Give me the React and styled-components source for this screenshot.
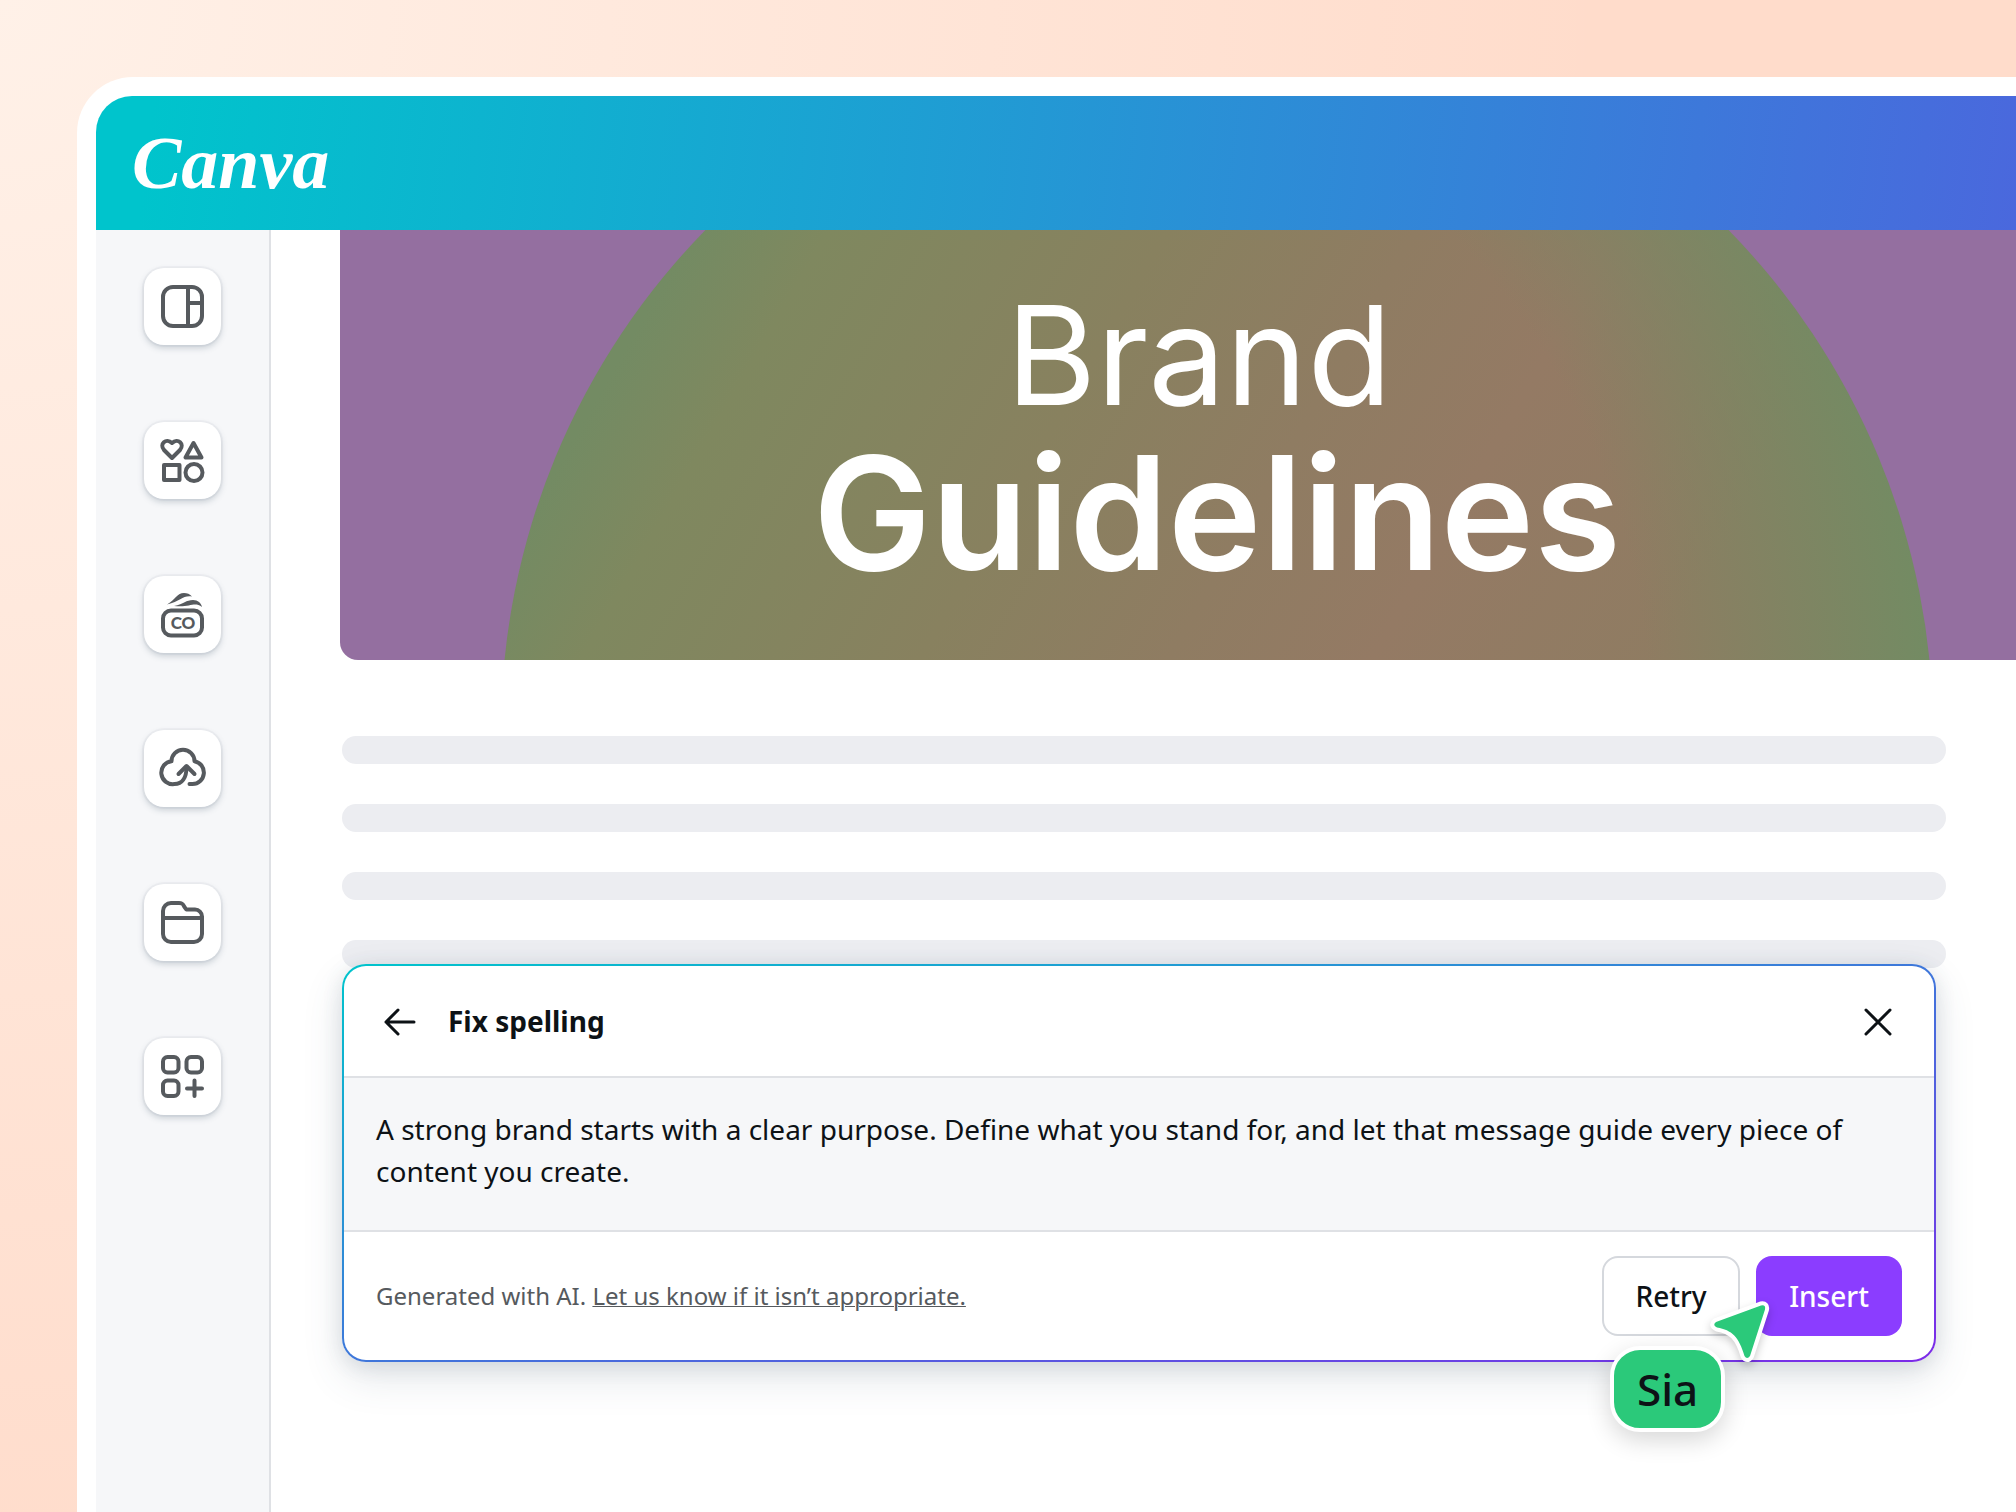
import styled, { createGlobalStyle } from "styled-components";

const GlobalStyle = createGlobalStyle`
  * {
    box-sizing: border-box;
  }

  body {
    margin: 0;
    overflow: hidden;
    font-family: "Noto Sans", sans-serif;
    color: #0d1216;
  }

  button {
    font-family: inherit;
    cursor: pointer;
  }
`;

const Page = styled.div`
  display: flex;
  min-height: 100vh;
  padding: 77px 0 0 77px;
  background:
    radial-gradient(circle at 0 0, #fff1e8 0%, rgba(255, 241, 232, 0) 1600px),
    #ffdccb;
`;

const Frame = styled.div`
  flex: 1;
  display: flex;
  padding: 19px 0 0 19px;
  border-top-left-radius: 56px;
  background: #fff;
`;

const AppWindow = styled.div`
  flex: 1;
  min-width: 0;
  display: flex;
  flex-direction: column;
  border-top-left-radius: 36px;
  overflow: hidden;
`;

const TopBar = styled.header`
  display: flex;
  align-items: center;
  height: 134px;
  padding: 0 36px;
  background: linear-gradient(97deg, #00c4cc 3%, #4a68dd 100%);
`;

const Logo = styled.a`
  font-family: "Liberation Serif", serif;
  font-size: 74px;
  line-height: 80px;
  font-weight: 700;
  font-style: italic;
  color: #fff;
  text-decoration: none;
`;

const Body = styled.div`
  flex: 1;
  display: flex;
`;

const Sidebar = styled.nav`
  display: flex;
  flex-direction: column;
  align-items: center;
  gap: 77px;
  width: 175px;
  padding-top: 38px;
  border-right: 2px solid #dfe1e5;
  background: #f6f7f9;
`;

const ToolButton = styled.button`
  display: flex;
  align-items: center;
  justify-content: center;
  width: 77px;
  height: 77px;
  padding: 0;
  border: 0;
  border-radius: 20px;
  background: #fff;
  color: #565a5e;
  box-shadow: 0 0 0 2px rgba(64, 87, 109, 0.04), 0 3px 6px rgba(64, 87, 109, 0.25);
`;

const ToolIcon = styled.svg`
  width: 55px;
  height: 55px;
  fill: none;
  stroke: currentColor;
  stroke-width: 4;
  stroke-linecap: round;
  stroke-linejoin: round;
`;

const Content = styled.main`
  flex: 1;
  min-width: 0;
  padding-left: 69px;
`;

const Hero = styled.section`
  display: flex;
  flex-direction: column;
  align-items: center;
  height: 430px;
  padding: 46px 0 0 78px;
  border-bottom-left-radius: 18px;
  overflow: hidden;
  position: relative;
  background: #946fa0;
`;

const Disc = styled.div`
  position: absolute;
  top: -215px;
  left: calc(50% + 39px - 716px);
  width: 1432px;
  height: 1432px;
  border-radius: 50%;
  background:
    radial-gradient(circle at 30% 50%, rgba(115, 139, 99, 0) 720px, #738b63 1000px),
    linear-gradient(
      120deg,
      #738b63 14%,
      #7f885f 20%,
      #88815f 35%,
      #8f7c62 46%,
      #947a64 55%,
      #8f7c62 68%
    );
`;

const HeroTitle = styled.h1`
  display: flex;
  flex-direction: column;
  align-items: center;
  margin: 0;
  position: relative;
  font-family: Inter, sans-serif;
  color: #fff;
`;

const TitleTop = styled.span`
  margin-right: 36px;
  font-size: 138px;
  line-height: 158px;
  font-weight: 400;
`;

const TitleBottom = styled.span`
  font-size: 158px;
  line-height: 158px;
  font-weight: 600;
`;

const TextBlock = styled.div`
  padding: 76px 70px 0 2px;
`;

const Lines = styled.div`
  display: flex;
  flex-direction: column;
  gap: 40px;
`;

const Line = styled.div`
  height: 28px;
  border-radius: 14px;
  background: #ecedf1;
`;

const Panel = styled.section`
  position: relative;
  margin: -4px 10px 0 0;
  border: 2px solid transparent;
  border-radius: 24px;
  background:
    linear-gradient(#fff, #fff) padding-box,
    linear-gradient(to bottom right, #00c4cc, #7d2ae8) border-box;
  box-shadow: 0 16px 40px rgba(64, 87, 109, 0.14), 0 4px 20px rgba(64, 87, 109, 0.14);
`;

const PanelHeader = styled.header`
  display: flex;
  align-items: center;
  height: 112px;
  padding: 0 32px;
  border-bottom: 2px solid #dfe1e5;
`;

const PanelTitle = styled.h2`
  flex: 1;
  margin: 0 0 0 24px;
  font-size: 28px;
  line-height: 40px;
  font-weight: 700;
`;

const IconButton = styled.button`
  display: flex;
  align-items: center;
  justify-content: center;
  width: 48px;
  height: 48px;
  padding: 0;
  border: 0;
  background: none;
  color: #0d1216;
`;

const ActionIcon = styled.svg`
  width: 36px;
  height: 36px;
  fill: none;
  stroke: currentColor;
  stroke-width: 3;
  stroke-linecap: round;
  stroke-linejoin: round;
`;

const Suggestion = styled.p`
  margin: 0;
  padding: 30px 32px 38px;
  border-bottom: 2px solid #dfe1e5;
  background: #f6f7f9;
  font-size: 28px;
  line-height: 42px;
`;

const PanelFooter = styled.footer`
  display: flex;
  align-items: center;
  justify-content: space-between;
  padding: 24px 32px;
`;

const Note = styled.p`
  margin: 0;
  font-size: 24px;
  line-height: 32px;
  color: #565a5e;

  a {
    color: inherit;
    text-decoration-thickness: 1px;
  }
`;

const Actions = styled.div`
  display: flex;
  gap: 16px;
`;

const ActionButton = styled.button`
  height: 80px;
  width: ${({ $primary }) => ($primary ? "146px" : "138px")};
  border: ${({ $primary }) => ($primary ? "0" : "2px solid #d5d8dd")};
  border-radius: 16px;
  background: ${({ $primary }) => ($primary ? "#8b3dff" : "#fff")};
  color: ${({ $primary }) => ($primary ? "#fff" : "#0d1216")};
  font-size: 28px;
  font-weight: 500;
`;

// collaborator pointer that floats over the panel
const Collaborator = styled.div`
  position: absolute;
  right: 160px;
  bottom: -72px;
  display: flex;
  flex-direction: column;
  width: 164px;
  pointer-events: none;
`;

const Pointer = styled.svg`
  align-self: flex-end;
  width: 66px;
  height: 68px;
  margin-bottom: -18px;
  overflow: visible;
  filter: drop-shadow(0 4px 4px rgba(0, 0, 0, 0.2));
`;

const NameTag = styled.span`
  align-self: flex-start;
  padding: 10px 23px;
  border: 4px solid #fff;
  border-radius: 30px;
  background: #2bc97a;
  box-shadow: 0 8px 24px rgba(0, 0, 0, 0.16);
  font-size: 44px;
  line-height: 58px;
  font-weight: 500;
`;

const tools = [
  {
    label: "Design",
    icon: (
      <>
        <rect x="8" y="8" width="39" height="39" rx="10" />
        <path d="M33 8v39M33 24h14" />
      </>
    ),
  },
  {
    label: "Elements",
    icon: (
      <>
        <path d="M17 25 9 17C4 11 11 4.500 17 10c6-5.500 13 1 8 7Z" />
        <path d="M38.500 10 30.500 24.500h16Z" />
        <path d="M9 32h15.500v15H9Z" />
        <circle cx="39" cy="39.500" r="8.500" />
      </>
    ),
  },
  {
    label: "Brand",
    icon: (
      <>
        <rect x="8" y="23.500" width="39" height="25" rx="8" />
        <path
          d="M12 17.500C21 12 22 6 29 6c3 0 6 1 8 3.500C28 8 26 14 12 17.500ZM19 19c10-2 12-6 19-6 5 0 8 3 9 7-8-6-12 1-28-1Z"
          fill="currentColor"
          strokeWidth="0"
        />
        <text
          x="28"
          y="42"
          textAnchor="middle"
          fontFamily="Lato, sans-serif"
          fontSize="17"
          fontWeight="900"
          fill="currentColor"
          stroke="none"
        >
          CO
        </text>
      </>
    ),
  },
  {
    label: "Uploads",
    icon: (
      <>
        <path d="M34.500 43h3a11.500 11.500 0 0 0 2-22.800 11.500 11.500 0 0 0-23 0A11.500 11.500 0 1 0 19.500 43c7.500 0 12-6 12-17" />
        <path d="M23.500 33l8-8 8 8" />
      </>
    ),
  },
  {
    label: "Projects",
    icon: (
      <>
        <path d="M8 16a8 8 0 0 1 8-8h8c4 0 4 1.500 5.500 4s1.500 2.500 4 2.500H40a7 7 0 0 1 7 7V39a8 8 0 0 1-8 8H16a8 8 0 0 1-8-8Z" />
        <path d="M8 23h39" />
      </>
    ),
  },
  {
    label: "Apps",
    icon: (
      <>
        <rect x="8" y="8" width="15.500" height="15.500" rx="4.500" />
        <rect x="31.500" y="8" width="15.500" height="15.500" rx="4.500" />
        <rect x="8" y="31.500" width="15.500" height="15.500" rx="4.500" />
        <path d="M39.500 31.500V47M32 39.500h15" />
      </>
    ),
  },
];

const App = () => {
  return (
    <>
      <GlobalStyle />
      <Page>
        <Frame>
          <AppWindow>
            <TopBar>
              <Logo href="#">Canva</Logo>
            </TopBar>
            <Body>
              <Sidebar>
                {tools.map((tool) => (
                  <ToolButton key={tool.label} aria-label={tool.label}>
                    <ToolIcon viewBox="0 0 55 55">{tool.icon}</ToolIcon>
                  </ToolButton>
                ))}
              </Sidebar>
              <Content>
                <Hero>
                  <Disc />
                  <HeroTitle>
                    <TitleTop>Brand</TitleTop>
                    <TitleBottom>Guidelines</TitleBottom>
                  </HeroTitle>
                </Hero>
                <TextBlock>
                  <Lines>
                    {[0, 1, 2, 3].map((line) => (
                      <Line key={line} />
                    ))}
                  </Lines>
                  <Panel>
                    <PanelHeader>
                      <IconButton aria-label="Back">
                        <ActionIcon viewBox="0 0 36 36">
                          <path d="M32 19H4M16 7 4 19l12 12" />
                        </ActionIcon>
                      </IconButton>
                      <PanelTitle>Fix spelling</PanelTitle>
                      <IconButton aria-label="Close">
                        <ActionIcon viewBox="0 0 36 36">
                          <path d="M6 7l24 24M30 7 6 31" />
                        </ActionIcon>
                      </IconButton>
                    </PanelHeader>
                    <Suggestion>
                      A strong brand starts with a clear purpose. Define what you stand for, and let
                      that message guide every piece of content you create.
                    </Suggestion>
                    <PanelFooter>
                      <Note>
                        Generated with AI. <a href="#">Let us know if it isn’t appropriate.</a>
                      </Note>
                      <Actions>
                        <ActionButton>Retry</ActionButton>
                        <ActionButton $primary>Insert</ActionButton>
                      </Actions>
                    </PanelFooter>
                    <Collaborator>
                      <Pointer viewBox="0 0 66 68">
                        <path
                          d="M8 26 53 9.500q5-1 4 4L42 60q-3 4-5.500 0C31 41 24 34 9 31.500q-5-2.500-1-5.500Z"
                          fill="#2bc97a"
                          stroke="#fff"
                          strokeWidth="8"
                          strokeLinejoin="round"
                          paintOrder="stroke"
                        />
                      </Pointer>
                      <NameTag>Sia</NameTag>
                    </Collaborator>
                  </Panel>
                </TextBlock>
              </Content>
            </Body>
          </AppWindow>
        </Frame>
      </Page>
    </>
  );
};

export default App;
